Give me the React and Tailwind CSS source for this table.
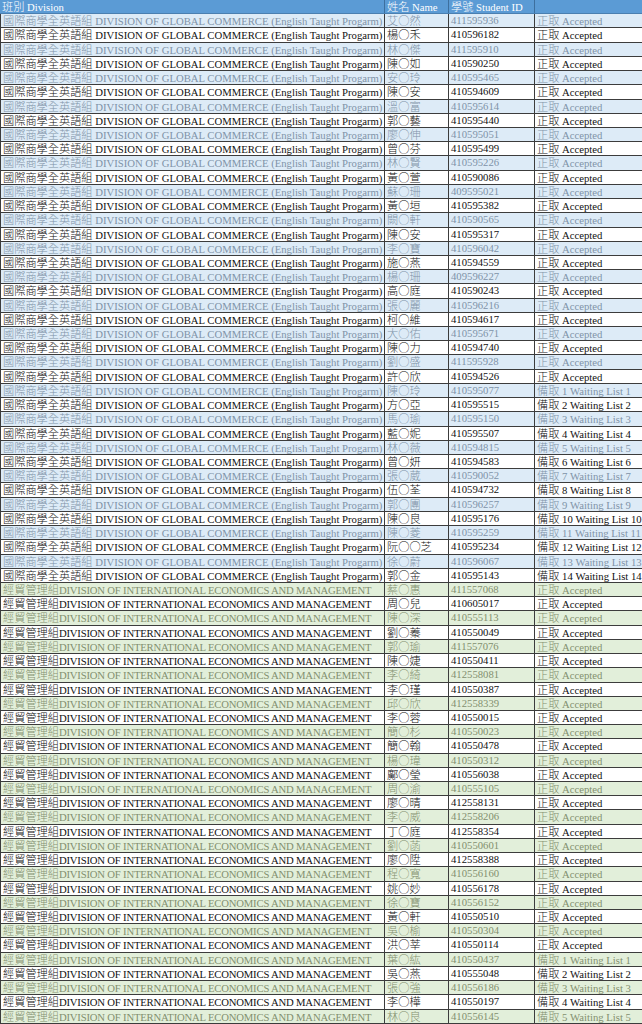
import React from 'react';

const GC = ['國際商學全英語組', ' DIVISION OF GLOBAL COMMERCE (English Taught Progarm)'];
const IEM = ['經貿管理組', 'DIVISION OF INTERNATIONAL ECONOMICS AND MANAGEMENT'];

const gcRows = [
  ['艾○然', '411595936'], ['楊○禾', '410596182'], ['林○傑', '411595910'], ['陳○如', '410590250'],
  ['安○玲', '410595465'], ['陳○安', '410594609'], ['溫○富', '410595614'], ['郭○藝', '410595440'],
  ['廖○伸', '410595051'], ['曾○芬', '410595499'], ['林○賢', '410595226'], ['黃○萱', '410590086'],
  ['蘇○珊', '409595021'], ['黃○垣', '410595382'], ['闕○軒', '410590565'], ['陳○安', '410595317'],
  ['李○寶', '410596042'], ['施○燕', '410594559'], ['楊○珊', '409596227'], ['高○庭', '410590243'],
  ['張○麗', '410596216'], ['柯○維', '410594617'], ['大○佑', '410595671'], ['陳○力', '410594740'],
  ['劉○盛', '411595928'], ['許○欣', '410594526'],
];
const gcWait = [
  ['陳○玲', '410595077'], ['方○亞', '410595515'], ['馬○瑜', '410595150'], ['藍○妮', '410595507'],
  ['林○薇', '410594815'], ['曾○妍', '410594583'], ['張○葳', '410590052'], ['伍○荃', '410594732'],
  ['郭○團', '410596257'], ['陳○良', '410595176'], ['陳○菱', '410595259'], ['阮○○芝', '410595234'],
  ['徐○蔚', '410596067'], ['郭○金', '410595143'],
];
const iemRows = [
  ['蔡○惠', '411557068'], ['周○兒', '410605017'], ['陳○深', '410555113'], ['劉○蓁', '410550049'],
  ['郭○瑜', '411557076'], ['陳○婕', '410550411'], ['李○綺', '412558081'], ['李○瑾', '410550387'],
  ['邱○欣', '412558339'], ['李○蓉', '410550015'], ['簡○杉', '410550023'], ['簡○翰', '410550478'],
  ['楊○瑋', '410550312'], ['鄺○瑩', '410556038'], ['周○渝', '410555105'], ['廖○晴', '412558131'],
  ['李○威', '412558206'], ['丁○庭', '412558354'], ['劉○菡', '410550601'], ['廖○陞', '412558388'],
  ['程○寬', '410556160'], ['姚○妙', '410556178'], ['徐○寶', '410556152'], ['黃○軒', '410550510'],
  ['吳○榆', '410550304'], ['洪○莘', '410550114'],
];
const iemWait = [
  ['葉○紘', '410550437'], ['吳○燕', '410555048'], ['張○強', '410556186'], ['李○樺', '410550197'],
  ['林○良', '410556145'],
];

const rows = [
  ...gcRows.map(([n, id]) => ({ div: GC, name: n, id, st: ['正取', ' Accepted'], group: 'gc' })),
  ...gcWait.map(([n, id], i) => ({ div: GC, name: n, id, st: ['備取', ` ${i + 1} Waiting List ${i + 1}`], group: 'gc' })),
  ...iemRows.map(([n, id]) => ({ div: IEM, name: n, id, st: ['正取', ' Accepted'], group: 'iem' })),
  ...iemWait.map(([n, id], i) => ({ div: IEM, name: n, id, st: ['備取', ` ${i + 1} Waiting List ${i + 1}`], group: 'iem' })),
];

const grid = 'grid grid-cols-[384px_64px_86px_108px] h-[14.22px] border-b border-[#3c3c3c]';
const cell = 'px-[2px] whitespace-nowrap overflow-hidden leading-[13px]';
const cjk = 'text-[11.2px] font-["Noto_Sans_CJK_TC",serif] font-light';

export default function App() {
  return (
    <div className="w-[642px] bg-white text-[10.7px] text-black font-['Liberation_Serif','Noto_Sans_CJK_TC',serif]">
      <div className={`${grid} bg-[#5b9bd5] text-white border-[#4a7fb0]`}>
        <div className={cell}><span className={cjk}>班別</span> Division</div>
        <div className={`${cell} border-l border-[#3d6f9e]`}><span className={cjk}>姓名</span> Name</div>
        <div className={`${cell} border-l border-[#3d6f9e]`}><span className={cjk}>學號</span> Student ID</div>
        <div className={`${cell} border-l border-[#3d6f9e]`}></div>
      </div>
      {rows.map((r, idx) => {
        const shaded = idx % 2 === 0;
        const tone = !shaded
          ? 'bg-white text-[#111]'
          : r.group === 'gc'
            ? 'bg-[#ddebf7] text-[#8093a8]'
            : 'bg-[#e2efda] text-[#838f6f]';
        return (
          <div key={idx} className={`${grid} ${tone}`}>
            <div className={`${cell} border-l border-[#3c3c3c]`}>
              <span className={cjk}>{r.div[0]}</span>
              <span className={r.group === 'iem' ? 'tracking-[-0.2px]' : ''}>{r.div[1]}</span>
            </div>
            <div className={`${cell} border-l border-[#3c3c3c]`}><span className={cjk}>{r.name}</span></div>
            <div className={`${cell} border-l border-[#3c3c3c]`}>{r.id}</div>
            <div className={`${cell} border-l border-[#3c3c3c]`}><span className={cjk}>{r.st[0]}</span>{r.st[1]}</div>
          </div>
        );
      })}
    </div>
  );
}
